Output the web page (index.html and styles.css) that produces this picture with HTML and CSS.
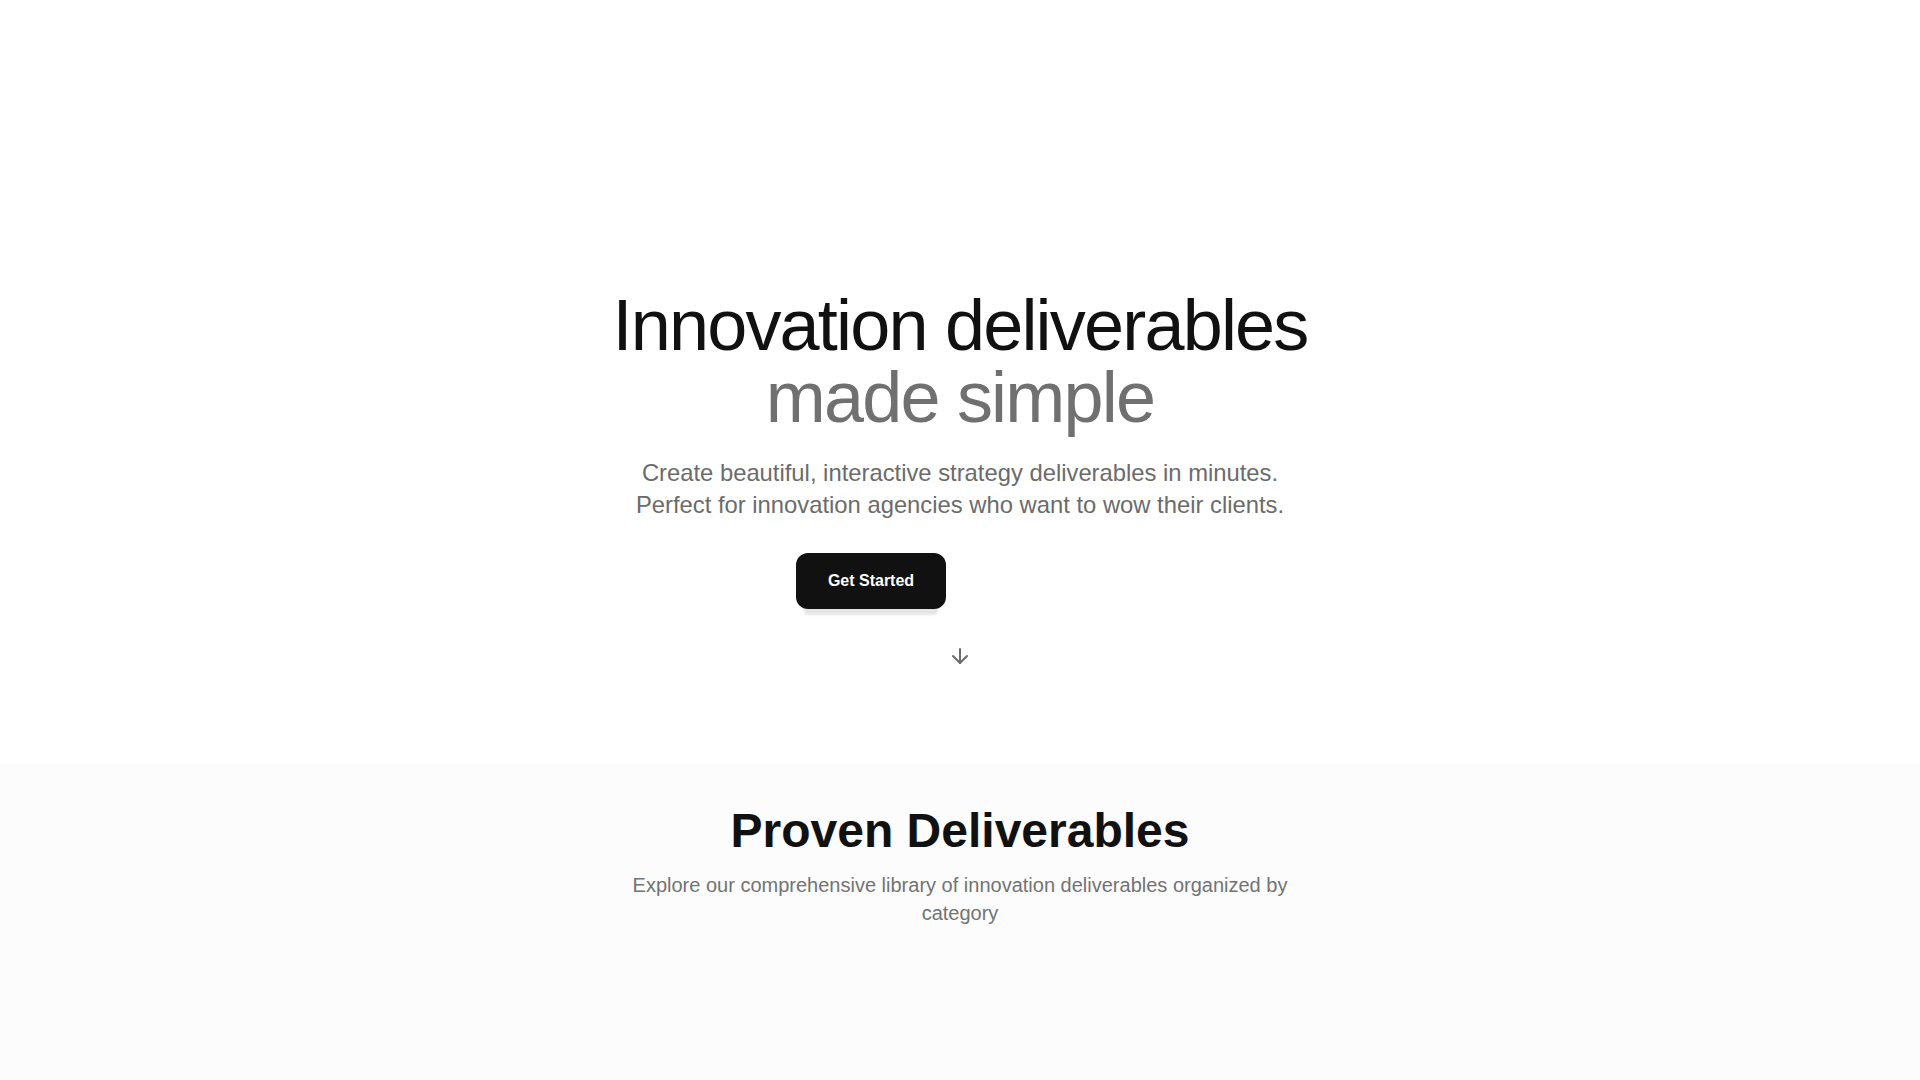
FILE: index.html
```html
<!DOCTYPE html>
<html lang="en">
<head>
<meta charset="utf-8">
<title>Innovation deliverables made simple</title>
<link rel="stylesheet" href="styles.css">
</head>
<body>
<main class="page">
  <section class="hero">
    <h1 class="hero-title">
      <span class="hero-title-main">Innovation deliverables</span>
      <span class="hero-title-sub">made simple</span>
    </h1>
    <p class="hero-lead">Create beautiful, interactive strategy deliverables in minutes.<br>Perfect for innovation agencies who want to wow their clients.</p>
    <div class="hero-actions">
      <a class="btn-primary" href="#">Get Started</a>
      <span class="btn-ghost" aria-hidden="true"></span>
    </div>
    <div class="scroll-hint">
      <svg class="scroll-icon" viewBox="0 0 24 24" width="24" height="24" fill="none" stroke="currentColor" stroke-width="2" stroke-linecap="round" stroke-linejoin="round"><path d="M12 5v14"/><path d="m19 12-7 7-7-7"/></svg>
    </div>
  </section>
  <section class="library">
    <h2 class="library-title">Proven Deliverables</h2>
    <p class="library-lead">Explore our comprehensive library of innovation deliverables organized by category</p>
  </section>
</main>
</body>
</html>
```
FILE: styles.css
```css
* { box-sizing: border-box; }
html, body { margin: 0; padding: 0; }
body {
  background: #ffffff;
  font-family: "Liberation Sans", Arial, sans-serif;
  color: #111111;
  -webkit-font-smoothing: antialiased;
}
.page { display: flex; flex-direction: column; }

.hero {
  display: flex;
  flex-direction: column;
  align-items: center;
  text-align: center;
  padding: 289px 24px 96px;
  background: #ffffff;
}
.hero-title {
  margin: 0 0 24px;
  font-size: 72px;
  line-height: 72px;
  font-weight: 400;
  letter-spacing: -0.025em;
  display: flex;
  flex-direction: column;
  align-items: center;
}
.hero-title-main { color: #111111; }
.hero-title-sub { color: #707070; }

.hero-lead {
  margin: 0 0 32px;
  font-size: 23.8px;
  line-height: 32px;
  color: #6b6b6b;
}

.hero-actions {
  display: flex;
  gap: 16px;
  justify-content: center;
}
.btn-primary {
  display: inline-flex;
  align-items: center;
  justify-content: center;
  height: 56px;
  padding: 0 32px;
  border-radius: 12px;
  background: #111111;
  color: #ffffff;
  font-size: 16px;
  font-weight: 700;
  text-decoration: none;
  box-shadow: 0 14px 3px -8px rgba(0, 0, 0, 0.1);
}
.btn-ghost {
  display: inline-block;
  width: 162px;
  height: 56px;
}

.scroll-hint {
  margin-top: 35px;
  height: 24px;
  color: #6b6b6b;
}
.scroll-icon { display: block; }

.library {
  background: #fcfcfc;
  display: flex;
  flex-direction: column;
  align-items: center;
  text-align: center;
  padding: 43px 24px 200px;
}
.library-title {
  margin: 0 0 16px;
  font-size: 48px;
  line-height: 48px;
  font-weight: 700;
  color: #111111;
}
.library-lead {
  margin: 0;
  max-width: 672px;
  font-size: 20px;
  line-height: 28px;
  color: #737373;
}
```
